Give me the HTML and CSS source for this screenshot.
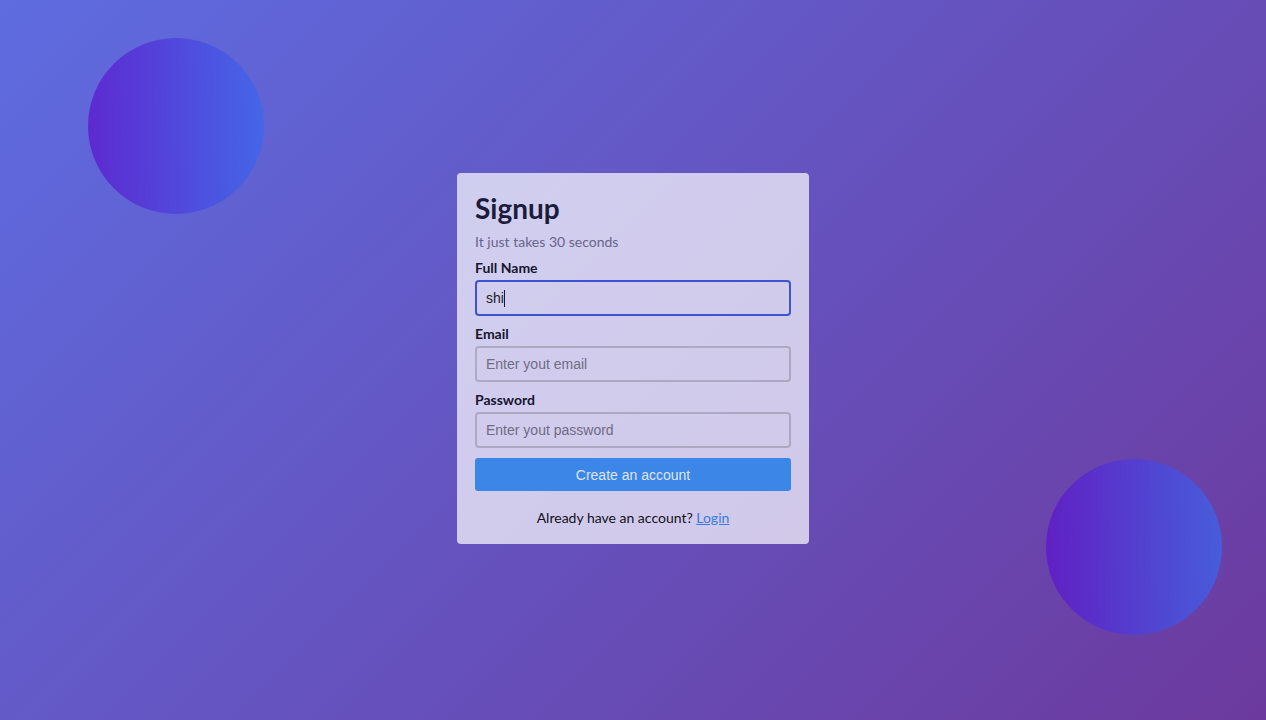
FILE: index.html
```html
<!DOCTYPE html>
<html lang="en">
<head>
<meta charset="utf-8">
<title>Signup</title>
<link rel="stylesheet" href="styles.css">
</head>
<body>
<div class="page">
  <div class="blob blob-top"></div>
  <div class="blob blob-bottom"></div>
  <form class="card">
    <h1 class="title">Signup</h1>
    <p class="subtitle">It just takes 30 seconds</p>
    <div class="field">
      <label class="label">Full Name</label>
      <div class="input focused"><span>shi</span><span class="caret"></span></div>
    </div>
    <div class="field">
      <label class="label">Email</label>
      <input class="input" type="email" placeholder="Enter yout email">
    </div>
    <div class="field">
      <label class="label">Password</label>
      <input class="input" type="password" placeholder="Enter yout password">
    </div>
    <button class="btn" type="button">Create an account</button>
    <p class="footer">Already have an account? <a href="#" class="link">Login</a></p>
  </form>
</div>
</body>
</html>
```
FILE: styles.css
```css
* { box-sizing: border-box; }
html, body { margin: 0; padding: 0; }
body {
  width: 1266px;
  height: 720px;
  overflow: hidden;
  font-family: Lato, "Noto Sans", sans-serif;
}
.page {
  position: relative;
  width: 1266px;
  height: 720px;
  background: linear-gradient(135deg, #5e6ce0 0%, #6c3a9e 100%);
  display: flex;
  align-items: center;
  justify-content: center;
}
.blob {
  position: absolute;
  width: 176px;
  height: 176px;
  border-radius: 50%;
  background: linear-gradient(90deg, #5d12cd, #3968ef);
  opacity: 0.72;
}
.blob-top { left: 88px; top: 38px; }
.blob-bottom { left: 1046px; top: 459px; }
.card {
  position: relative;
  width: 352px;
  margin-top: -3px;
  padding: 18px 18px 16px 18px;
  background: rgba(255, 255, 255, 0.7);
  border-radius: 4px;
  display: flex;
  flex-direction: column;
}
.title {
  margin: 0;
  font-size: 28px;
  line-height: 34px;
  font-weight: 700;
  color: #1d1b3c;
}
.subtitle {
  margin: 7px 0 0 0;
  font-size: 14px;
  line-height: 20px;
  color: #67658a;
}
.field {
  display: flex;
  flex-direction: column;
  margin-top: 9px;
}
.field:first-of-type { margin-top: 7px; }
.label {
  font-size: 14px;
  line-height: 18px;
  font-weight: 700;
  color: #17152f;
  margin-bottom: 3px;
}
.input {
  width: 316px;
  height: 36px;
  border: 2px solid rgba(0, 0, 0, 0.17);
  border-radius: 4px;
  background: transparent;
  padding: 0 9px;
  font-family: "Liberation Sans", Arial, sans-serif;
  font-size: 14px;
  color: #1a1a2a;
  outline: none;
  display: flex;
  align-items: center;
}
.input::placeholder { color: #6f6c84; }
.input.focused { border-color: #3d54cf; }
.caret {
  display: inline-block;
  width: 1px;
  height: 17px;
  background: #1a1a2a;
}
.btn {
  margin-top: 10px;
  width: 316px;
  height: 33px;
  border: none;
  border-radius: 3px;
  background: #3b86e6;
  color: #dfe5f6;
  font-family: "Liberation Sans", Arial, sans-serif;
  font-size: 14px;
  cursor: pointer;
}
.footer {
  margin: 17px 0 0 0;
  text-align: center;
  font-size: 14px;
  line-height: 20px;
  color: #121122;
}
.link { color: #3a7be0; text-decoration: underline; }
```
